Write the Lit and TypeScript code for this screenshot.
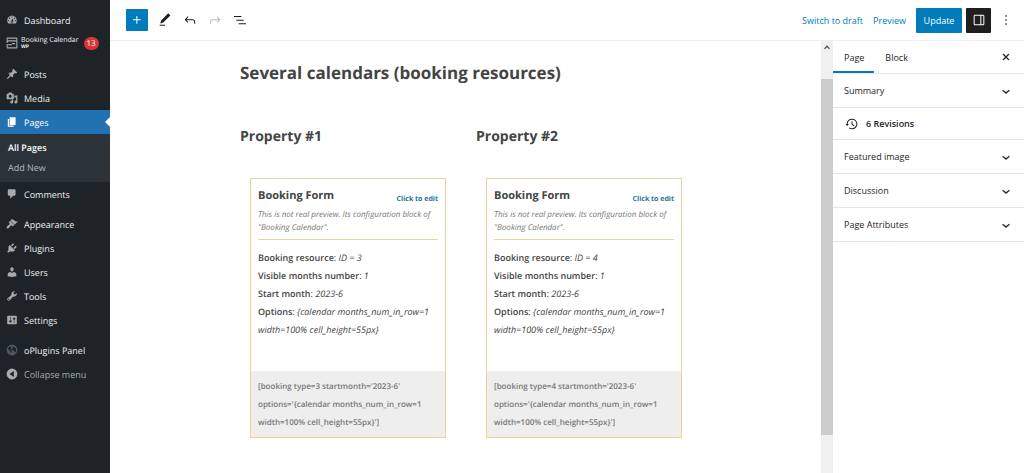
import { LitElement, html, css, svg, nothing } from "lit";
import { customElement, property, state } from "lit/decorators.js";
import { classMap } from "lit/directives/class-map.js";

// Sidebar glyphs use a 20-unit grid, editor glyphs a 24-unit grid.
const GLYPHS: Record<string, [number, string]> = {
  dashboard: [20, "M3.76 16h12.48c1.1-1.37 1.76-3.11 1.76-5 0-4.42-3.58-8-8-8s-8 3.58-8 8c0 1.89.66 3.63 1.76 5zM10 4c.55 0 1 .45 1 1s-.45 1-1 1-1-.45-1-1 .45-1 1-1zM6 6c.55 0 1 .45 1 1s-.45 1-1 1-1-.45-1-1 .45-1 1-1zm8 0c.55 0 1 .45 1 1s-.45 1-1 1-1-.45-1-1 .45-1 1-1zm-5.37 5.55L12 7v6c0 1.1-.9 2-2 2s-2-.9-2-2c0-.57.24-1.08.63-1.45zM4 10c.55 0 1 .45 1 1s-.45 1-1 1-1-.45-1-1 .45-1 1-1zm12 0c.55 0 1 .45 1 1s-.45 1-1 1-1-.45-1-1 .45-1 1-1zm-5 3c0-.55-.45-1-1-1s-1 .45-1 1 .45 1 1 1 1-.45 1-1z"],
  booking: [20, "M2.5 1h15A1.5 1.5 0 0 1 19 2.5v15a1.5 1.5 0 0 1-1.5 1.5h-15A1.5 1.5 0 0 1 1 17.5V12h9v1.8H2.8v3.4h14.4V7.3H2.8V10H1V2.5A1.5 1.5 0 0 1 2.5 1zM2.8 2.8v2.7h14.4V2.8zM10 12v-1.8h5V12z"],
  posts: [20, "M10.44 3.02l1.82-1.82 6.36 6.35-1.83 1.82c-1.05-.68-2.48-.57-3.41.36l-.75.75c-.92.93-1.04 2.35-.35 3.41l-1.83 1.82-2.41-2.41-2.8 2.79c-.42.42-3.38 2.71-3.8 2.29s1.86-3.39 2.28-3.81l2.79-2.79L4.1 9.36l1.83-1.82c1.05.69 2.48.57 3.4-.36l.75-.75c.93-.92 1.05-2.35.36-3.41z"],
  media: [20, "M13 11V4c0-.55-.45-1-1-1h-1.67L9 1H5L3.67 3H2c-.55 0-1 .45-1 1v7c0 .55.45 1 1 1h10c.55 0 1-.45 1-1zM7 4.5c1.38 0 2.5 1.12 2.5 2.5S8.38 9.5 7 9.5 4.5 8.38 4.5 7 5.62 4.5 7 4.5zM14 6h5v10.5c0 1.38-1.12 2.5-2.5 2.5S14 17.88 14 16.5s1.12-2.5 2.5-2.5c.17 0 .34.02.5.05V9h-3V6zm-4 8.05V13h2v3.5c0 1.38-1.12 2.5-2.5 2.5S7 17.88 7 16.5 8.12 14 9.5 14c.17 0 .34.02.5.05z"],
  pages: [20, "M6 15V2h10v13H6zm-1 1h8v2H3V5h2v11z"],
  comments: [20, "M5 2h9c1.1 0 2 .9 2 2v7c0 1.1-.9 2-2 2h-2l-5 5v-5H5c-1.1 0-2-.9-2-2V4c0-1.1.9-2 2-2z"],
  appearance: [20, "M14.48 11.06L7.41 3.99l1.5-1.5c.5-.56 2.3-.47 3.51.32 1.21.8 1.43 1.28 2.91 2.1 1.18.64 2.45 1.26 4.45.85zm-.71.71L6.7 4.7 4.93 6.47c-.39.39-.39 1.02 0 1.41l1.06 1.06c.39.39.39 1.03 0 1.42-.6.6-1.43 1.11-2.21 1.69-.35.26-.7.53-1.01.84C1.43 14.23.4 16.08 1.4 17.07c.99 1 2.84-.03 4.18-1.36.31-.31.58-.66.85-1.02.57-.78 1.08-1.61 1.69-2.21.39-.39 1.02-.39 1.41 0l1.06 1.06c.39.39 1.02.39 1.41 0z"],
  plugins: [20, "M13.11 4.36L9.87 7.6 8 5.73l3.24-3.24c.35-.34 1.05-.2 1.56.32.52.51.66 1.21.31 1.55zm-8 1.77l.91-1.12 9.01 9.01-1.19.84c-.71.71-2.63 1.16-3.82 1.16H6.14L4.9 17.26c-.59.59-1.54.59-2.12 0-.59-.58-.59-1.53 0-2.12l1.24-1.24v-3.88c0-1.13.4-3.19 1.09-3.89zm7.26 3.97l3.24-3.24c.34-.35 1.04-.21 1.55.31.52.51.66 1.21.31 1.55l-3.24 3.25z"],
  users: [20, "M10 9.25c-2.27 0-2.73-3.44-2.73-3.44C7 4.02 7.82 2 9.97 2c2.16 0 2.98 2.02 2.71 3.81 0 0-.41 3.44-2.68 3.44zm0 2.57L12.72 10c2.39 0 4.52 2.33 4.52 4.53v2.49s-3.65 1.13-7.24 1.13c-3.65 0-7.24-1.13-7.24-1.13v-2.49c0-2.25 1.94-4.48 4.47-4.48z"],
  tools: [20, "M16.68 9.77c-1.34 1.34-3.3 1.67-4.95.99l-5.41 6.52c-.99.99-2.59.99-3.58 0s-.99-2.59 0-3.57l6.52-5.42c-.68-1.65-.35-3.61.99-4.95 1.28-1.28 3.12-1.62 4.72-1.06l-2.89 2.89 2.82 2.82 2.86-2.87c.53 1.58.18 3.39-1.08 4.65zM3.81 16.21c.4.39 1.04.39 1.43 0 .4-.4.4-1.04 0-1.43-.39-.4-1.03-.4-1.43 0-.39.39-.39 1.03 0 1.43z"],
  settings: [20, "M18 16V4c0-.55-.45-1-1-1H3c-.55 0-1 .45-1 1v12c0 .55.45 1 1 1h14c.55 0 1-.45 1-1zM8 11h1c.55 0 1 .45 1 1s-.45 1-1 1H8v1.5c0 .28-.22.5-.5.5s-.5-.22-.5-.5V13H6c-.55 0-1-.45-1-1s.45-1 1-1h1V5.5c0-.28.22-.5.5-.5s.5.22.5.5V11zm5-2h-1c-.55 0-1-.45-1-1s.45-1 1-1h1V5.5c0-.28.22-.5.5-.5s.5.22.5.5V7h1c.55 0 1 .45 1 1s-.45 1-1 1h-1v5.5c0 .28-.22.5-.5.5s-.5-.22-.5-.5V9z"],
  globe: [20, "M10 1a9 9 0 1 0 0 18 9 9 0 0 0 0-18zM3 7l3-3 3 1-1 3 2 2-2 5-2-4zm9-3l4 3 1 4-2 3-2-3-3-2z"],
  collapse: [20, "M10 1a9 9 0 1 0 0 18 9 9 0 0 0 0-18zM13 5v10l-7-5z"],
  plus: [24, "M11 12.5V17.5H12.5V12.5H17.5V11H12.5V6H11V11H6V12.5H11Z"],
  edit: [24, "M20.1 5.1L16.9 2 6.2 12.7l-1.3 4.4 4.5-1.3L20.1 5.1zM4 20.8h8v-1.5H4v1.5z"],
  undo: [24, "M18.3 11.7c-.6-.6-1.4-.9-2.3-.9H6.7l2.9-3.3-1.1-1-4.5 5L8.5 16l1-1-2.7-2.7H16c.5 0 .9.2 1.3.5 1 1 1 3.4 1 4.5v.3h1.5v-.2c0-1.5 0-4.3-1.5-5.7z"],
  redo: [24, "M15.6 6.5l-1.1 1 2.9 3.3H8c-.9 0-1.7.3-2.3.9-1.4 1.5-1.4 4.2-1.4 5.6v.2h1.5v-.3c0-1.1 0-3.5 1-4.5.3-.3.7-.5 1.3-.5h9.2L14.5 15l1.1 1.1 4.6-4.6-4.6-5z"],
  list: [24, "M3 6h11v1.5H3V6Zm3.5 5.5h11V13h-11v-1.5ZM21 17H10v1.5h11V17Z"],
  drawer: [24, "M18 4H6c-1.1 0-2 .9-2 2v12c0 1.1.9 2 2 2h12c1.1 0 2-.9 2-2V6c0-1.1-.9-2-2-2zm-4 14.5H6c-.3 0-.5-.2-.5-.5V6c0-.3.2-.5.5-.5h8v13zm4.5-.5c0 .3-.2.5-.5.5h-2.5v-13H18c.3 0 .5.2.5.5v12z"],
  more: [24, "M13 19h-2v-2h2v2zm0-6h-2v-2h2v2zm0-6h-2V5h2v2z"],
  close: [24, "M12 13.06l3.712 3.713 1.061-1.06L13.061 12l3.712-3.712-1.06-1.06L12 10.938 8.288 7.227l-1.061 1.06L10.939 12l-3.712 3.712 1.06 1.061L12 13.061z"],
  chevron: [24, "M17.5 11.6L12 16l-5.5-4.4.9-1.2L12 14l4.5-3.6 1 1.2z"],
  up: [24, "M3 16.5L12 7l9 9.5-2.5 2.5-6.5-6.5L5.5 19z"],
  history: [24, "M5.5 12h1.75l-2.5 3-2.5-3H4a8 8 0 1 1 3.134 6.35l.907-1.194A6.5 6.5 0 1 0 5.5 12zm9.53 1.97l-2.28-2.28V8.5a.75.75 0 0 0-1.5 0V12a.747.747 0 0 0 .218.529l2.502 2.502a.75.75 0 1 0 1.06-1.061z"],
};

@customElement("ui-icon")
class UiIcon extends LitElement {
  @property() name = "";
  static styles = css`
    :host { display: block; flex: none; width: 16px; height: 16px; }
    svg { display: block; width: 100%; height: 100%; fill: currentColor; }
    .heavy { stroke: currentColor; stroke-width: 0.5; }
  `;
  render() {
    const [box, d] = GLYPHS[this.name];
    const heavy = ["chevron", "close"].includes(this.name);
    return html`<svg viewBox="0 0 ${box} ${box}" aria-hidden="true">
      ${svg`<path class=${heavy ? "heavy" : ""} fill-rule="evenodd" d=${d}></path>`}
    </svg>`;
  }
}

interface MenuEntry {
  icon: string;
  label: string;
  tone?: string;
  children?: string[];
}

const MENU: MenuEntry[][] = [
  [
    { icon: "posts", label: "Posts" },
    { icon: "media", label: "Media" },
    { icon: "pages", label: "Pages", tone: "current", children: ["All Pages", "Add New"] },
    { icon: "comments", label: "Comments" },
  ],
  [
    { icon: "appearance", label: "Appearance" },
    { icon: "plugins", label: "Plugins" },
    { icon: "users", label: "Users" },
    { icon: "tools", label: "Tools" },
    { icon: "settings", label: "Settings" },
  ],
];

@customElement("admin-menu")
class AdminMenu extends LitElement {
  static styles = css`
    :host { display: block; background: #1d2327; color: #f0f0f1; font-size: 9px; }
    nav { display: flex; flex-direction: column; gap: 6px; padding-top: 8px; }
    ul { list-style: none; margin: 0; padding: 0; }
    .item {
      display: flex; align-items: center; gap: 6px; width: 100%; height: 24px;
      box-sizing: border-box; padding: 0 6px; border: 0; background: none;
      color: inherit; font: inherit; text-decoration: none; white-space: nowrap;
    }
    ui-icon { width: 12px; height: 12px; color: #a7aaad; }
    .current { position: relative; background: #2271b1; color: #fff; }
    .current ui-icon { color: #fff; }
    .current::after {
      content: ""; position: absolute; right: 0; top: 7px;
      border: 5px solid transparent; border-right-color: #fff; border-left-width: 0;
    }
    .sub { background: #2c3338; padding: 4px 0; }
    .sub a {
      display: block; padding: 0 8px; line-height: 20px;
      color: #b4b9be; text-decoration: none;
    }
    .sub .chosen { color: #fff; font-weight: 600; }
    .booking { height: 22px; margin-bottom: 2px; padding-right: 0; font-size: 7px; gap: 3px; }
    .booking .name { line-height: 8px; }
    .booking small { display: block; font-size: 5px; line-height: 4px; font-weight: 700; }
    .count {
      flex: none; min-width: 15px; height: 13px; margin-left: 2px; border-radius: 7px;
      background: #d63638; color: #fff; font-size: 8px; line-height: 13px; text-align: center;
    }
    .dim ui-icon { color: #50575e; }
    .muted { color: #a7aaad; }
  `;
  entry(e: MenuEntry) {
    return html`<li>
      <a href="#" class="item ${e.tone ?? ""}"><ui-icon name=${e.icon}></ui-icon>${e.label}</a>
      ${e.children
        ? html`<ul class="sub">
            ${e.children.map((c, i) => html`<li><a href="#" class=${classMap({ chosen: i === 0 })}>${c}</a></li>`)}
          </ul>`
        : nothing}
    </li>`;
  }
  render() {
    return html`<nav aria-label="Main menu">
      <ul>
        <li><a href="#" class="item"><ui-icon name="dashboard"></ui-icon>Dashboard</a></li>
        <li>
          <a href="#" class="item booking">
            <ui-icon name="booking"></ui-icon>
            <span class="name">Booking Calendar<small>WP</small></span>
            <span class="count">13</span>
          </a>
        </li>
      </ul>
      ${MENU.map((group) => html`<ul>${group.map((e) => this.entry(e))}</ul>`)}
      <ul>
        <li><a href="#" class="item dim"><ui-icon name="globe"></ui-icon>oPlugins Panel</a></li>
        <li><button class="item muted"><ui-icon name="collapse"></ui-icon>Collapse menu</button></li>
      </ul>
    </nav>`;
  }
}

@customElement("editor-bar")
class EditorBar extends LitElement {
  static styles = css`
    :host {
      display: flex; align-items: center; justify-content: space-between; height: 40px;
      padding: 0 7px 0 16px; border-bottom: 1px solid #f0f0f0; background: #fff; font-size: 9px;
    }
    .group { display: flex; align-items: center; gap: 3px; }
    .actions { gap: 4px; }
    button {
      display: grid; place-items: center; width: 22px; height: 22px; padding: 0; border: 0;
      border-radius: 1px; background: none; color: #1e1e1e; font: inherit;
    }
    .add { background: #007cba; color: #fff; margin-right: 3px; }
    button:disabled { color: #b8b8b8; }
    .link { width: auto; margin-right: 6px; color: #007cba; }
    .update { width: 46px; height: 25px; background: #007cba; color: #fff; }
    .drawer { width: 25px; height: 25px; background: #1e1e1e; color: #fff; }
  `;
  render() {
    return html`
      <div class="group">
        <button class="add" aria-label="Add block"><ui-icon name="plus"></ui-icon></button>
        <button aria-label="Tools"><ui-icon name="edit"></ui-icon></button>
        <button aria-label="Undo"><ui-icon name="undo"></ui-icon></button>
        <button aria-label="Redo" disabled><ui-icon name="redo"></ui-icon></button>
        <button aria-label="Document overview"><ui-icon name="list"></ui-icon></button>
      </div>
      <div class="group actions">
        <button class="link">Switch to draft</button>
        <button class="link">Preview</button>
        <button class="update">Update</button>
        <button class="drawer" aria-label="Settings"><ui-icon name="drawer"></ui-icon></button>
        <button aria-label="Options"><ui-icon name="more"></ui-icon></button>
      </div>
    `;
  }
}

@customElement("booking-block")
class BookingBlock extends LitElement {
  @property({ type: Number }) resource = 1;
  static styles = css`
    :host { display: block; border: 1px solid #f0d199; color: #444; font-size: 9px; }
    .body { padding: 8px 7px 32px; }
    header { display: flex; justify-content: space-between; align-items: flex-end; }
    h3 { margin: 0; font-size: 11px; line-height: 18px; font-weight: 700; }
    .edit { color: #21759b; font-size: 7px; line-height: 10px; font-weight: 700; text-decoration: none; }
    .note {
      margin: 3px 0 9px; padding-bottom: 5px; border-bottom: 1px solid #f0d199;
      color: #777; font-size: 8px; line-height: 13px; font-style: italic;
    }
    dl { margin: 0; line-height: 18px; }
    dt, dd { display: inline; margin: 0; }
    dt { font-weight: 600; }
    dd { font-style: italic; }
    .code {
      margin: 0; padding: 7px 7px 5px; background: #eee; color: #777;
      font-size: 8px; line-height: 18px; font-weight: 600;
    }
  `;
  render() {
    const options = "{calendar months_num_in_row=1 width=100% cell_height=55px}";
    const rows = [
      ["Booking resource", `ID = ${this.resource}`],
      ["Visible months number", "1"],
      ["Start month", "2023-6"],
      ["Options", options],
    ];
    const shortcode = `[booking type=${this.resource} startmonth='2023-6' options='${options}']`;
    return html`
      <div class="body">
        <header>
          <h3>Booking Form</h3>
          <a class="edit" href="#">Click to edit</a>
        </header>
        <p class="note">This is not real preview. Its configuration block of "Booking Calendar".</p>
        <dl>${rows.map(([k, v]) => html`<div><dt>${k}</dt>: <dd>${v}</dd></div>`)}</dl>
      </div>
      <p class="code">${shortcode}</p>
    `;
  }
}

@customElement("editor-canvas")
class EditorCanvas extends LitElement {
  static styles = css`
    :host { display: flex; background: #fff; color: #444; }
    .page { flex: 1; min-width: 0; padding: 18px 19px 0 20px; }
    .content { max-width: 452px; margin: 0 auto; }
    h1, h2 { margin: 0; font-weight: 700; }
    h1 { font-size: 17px; line-height: 28px; }
    h2 { font-size: 14px; line-height: 24px; }
    .columns { display: grid; grid-template-columns: 1fr 1fr; gap: 20px; margin-top: 38px; }
    booking-block { margin: 29px 10px 0; }
    .scroll {
      display: flex; flex-direction: column; align-items: center; width: 12px; background: #f0f0f0;
    }
    .scroll ui-icon { width: 8px; height: 8px; margin: 2px 0 28px; color: #505050; }
    .thumb { width: 12px; height: 356px; background: #cdcdcd; }
  `;
  render() {
    return html`
      <main class="page">
        <div class="content">
          <h1>Several calendars (booking resources)</h1>
          <div class="columns">
            ${[3, 4].map(
              (id, i) => html`<section>
                <h2>${`Property #${i + 1}`}</h2>
                <booking-block .resource=${id}></booking-block>
              </section>`
            )}
          </div>
        </div>
      </main>
      <div class="scroll" aria-hidden="true"><ui-icon name="up"></ui-icon><div class="thumb"></div></div>
    `;
  }
}

@customElement("settings-panel")
class SettingsPanel extends LitElement {
  @state() private tab = "Page";
  static styles = css`
    :host { display: block; background: #fff; color: #1e1e1e; font-size: 9px; }
    button { border: 0; background: none; color: inherit; font: inherit; padding: 0; }
    .tabs { display: flex; height: 32px; border-bottom: 1px solid #e8e8e8; }
    .tab { padding: 2px 10px 0 11px; box-sizing: border-box; border-bottom: 2px solid transparent; }
    .tab.on { border-bottom-color: #007cba; }
    .close { margin-left: auto; padding-right: 10px; }
    .row {
      display: flex; align-items: center; justify-content: space-between; width: 100%;
      height: 34px; box-sizing: border-box; padding: 0 10px 0 11px; border-bottom: 1px solid #e4e4e4;
    }
    .row.revisions { justify-content: flex-start; gap: 6px; height: 32px; font-weight: 600; }
  `;
  row(label: string) {
    return html`<button class="row" aria-expanded="false">${label}<ui-icon name="chevron"></ui-icon></button>`;
  }
  render() {
    return html`
      <div class="tabs" role="tablist">
        ${["Page", "Block"].map(
          (t) => html`<button
            role="tab"
            aria-selected=${this.tab === t}
            class=${classMap({ tab: true, on: this.tab === t })}
            @click=${() => (this.tab = t)}
          >${t}</button>`
        )}
        <button class="close" aria-label="Close settings"><ui-icon name="close"></ui-icon></button>
      </div>
      ${this.row("Summary")}
      <button class="row revisions"><ui-icon name="history"></ui-icon>6 Revisions</button>
      ${["Featured image", "Discussion", "Page Attributes"].map((l) => this.row(l))}
    `;
  }
}

@customElement("app-root")
class AppRoot extends LitElement {
  static styles = css`
    :host {
      display: grid; grid-template: auto 1fr / 110px minmax(0, 1fr) 191px;
      min-height: 100vh; background: #fff; font-family: "Open Sans", "Noto Sans", sans-serif;
      text-rendering: geometricPrecision;
    }
    admin-menu { grid-row: 1 / 3; }
    editor-bar { grid-column: 2 / 4; }
  `;
  render() {
    return html`
      <admin-menu></admin-menu>
      <editor-bar></editor-bar>
      <editor-canvas></editor-canvas>
      <settings-panel></settings-panel>
    `;
  }
}
